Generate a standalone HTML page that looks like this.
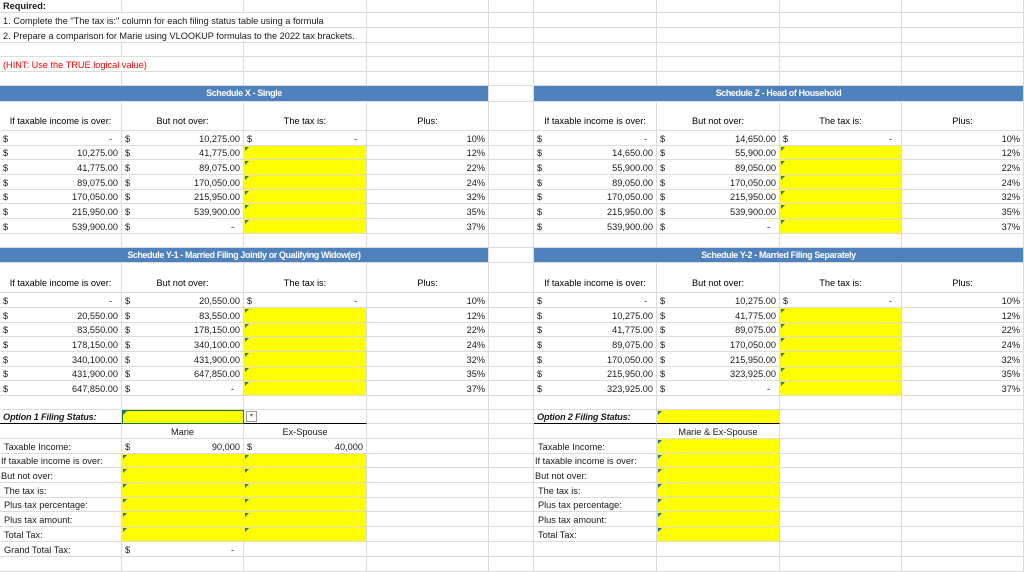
<!DOCTYPE html>
<html><head><meta charset="utf-8"><style>
*{margin:0;padding:0;box-sizing:border-box}
body{width:1024px;height:562px;overflow:hidden;background:#fff;font-family:"Liberation Sans",Arial,sans-serif;font-size:9.2px;color:#1a1a1a;position:relative}
table{border-collapse:separate;border-spacing:0;table-layout:fixed;width:1024px;position:absolute;left:0;top:0}
td{border-right:1px solid #dcdcdc;border-bottom:1px solid #dcdcdc;padding:0 3px;white-space:nowrap;overflow:visible;vertical-align:bottom;line-height:11px;position:relative}
.bn{background:#4f81bd;color:#fff;font-weight:bold;text-align:center;letter-spacing:-0.35px;vertical-align:middle;font-size:8.9px}
.y{background:#ffff00}
.c{text-align:center}.r{text-align:right}
.h td{vertical-align:bottom;padding-bottom:3px;color:#000}
.a{display:flex;justify-content:space-between}
.d{padding-right:6px}
.t::before{content:"";position:absolute;left:1px;top:1px;border-top:4px solid #1e73a8;border-right:4px solid transparent}
.bb{border-bottom:1px solid #000}
.it{font-style:italic;font-weight:bold;letter-spacing:-0.2px}
</style></head><body>
<table>
<colgroup><col style="width:122px"><col style="width:122px"><col style="width:123px"><col style="width:122px"><col style="width:45px"><col style="width:123px"><col style="width:123px"><col style="width:122px"><col style="width:122px"></colgroup>
<tr style="height:13px"><td style="font-weight:bold">Required:</td><td></td><td></td><td></td><td></td><td></td><td></td><td></td><td></td></tr>
<tr style="height:15px"><td colspan="3">1. Complete the "The tax is:" column for each filing status table using a formula</td><td></td><td></td><td></td><td></td><td></td><td></td></tr>
<tr style="height:15px"><td colspan="3">2. Prepare a comparison for Marie using VLOOKUP formulas to the 2022 tax brackets.</td><td></td><td></td><td></td><td></td><td></td><td></td></tr>
<tr style="height:14px"><td></td><td></td><td></td><td></td><td></td><td></td><td></td><td></td><td></td></tr>
<tr style="height:15px"><td colspan="2" style="color:#ff0000">(HINT: Use the TRUE logical value)</td><td></td><td></td><td></td><td></td><td></td><td></td><td></td></tr>
<tr style="height:14px"><td></td><td></td><td></td><td></td><td></td><td></td><td></td><td></td><td></td></tr>
<tr style="height:16px"><td colspan="4" class="bn">Schedule X - Single</td><td></td><td colspan="4" class="bn">Schedule Z - Head of Household</td></tr>
<tr class="h" style="height:29px"><td class="c">If taxable income is over:</td><td class="c">But not over:</td><td class="c">The tax is:</td><td class="c">Plus:</td><td></td><td class="c">If taxable income is over:</td><td class="c">But not over:</td><td class="c">The tax is:</td><td class="c">Plus:</td></tr>
<tr style="height:15px"><td><div class="a"><span>$</span><span class="d">-</span></div></td><td><div class="a"><span>$</span><span>10,275.00</span></div></td><td><div class="a"><span>$</span><span class="d">-</span></div></td><td class="r">10%</td><td></td><td><div class="a"><span>$</span><span class="d">-</span></div></td><td><div class="a"><span>$</span><span>14,650.00</span></div></td><td><div class="a"><span>$</span><span class="d">-</span></div></td><td class="r">10%</td></tr>
<tr style="height:14px"><td><div class="a"><span>$</span><span>10,275.00</span></div></td><td><div class="a"><span>$</span><span>41,775.00</span></div></td><td class="y t"></td><td class="r">12%</td><td></td><td><div class="a"><span>$</span><span>14,650.00</span></div></td><td><div class="a"><span>$</span><span>55,900.00</span></div></td><td class="y t"></td><td class="r">12%</td></tr>
<tr style="height:15px"><td><div class="a"><span>$</span><span>41,775.00</span></div></td><td><div class="a"><span>$</span><span>89,075.00</span></div></td><td class="y t"></td><td class="r">22%</td><td></td><td><div class="a"><span>$</span><span>55,900.00</span></div></td><td><div class="a"><span>$</span><span>89,050.00</span></div></td><td class="y t"></td><td class="r">22%</td></tr>
<tr style="height:15px"><td><div class="a"><span>$</span><span>89,075.00</span></div></td><td><div class="a"><span>$</span><span>170,050.00</span></div></td><td class="y t"></td><td class="r">24%</td><td></td><td><div class="a"><span>$</span><span>89,050.00</span></div></td><td><div class="a"><span>$</span><span>170,050.00</span></div></td><td class="y t"></td><td class="r">24%</td></tr>
<tr style="height:14px"><td><div class="a"><span>$</span><span>170,050.00</span></div></td><td><div class="a"><span>$</span><span>215,950.00</span></div></td><td class="y t"></td><td class="r">32%</td><td></td><td><div class="a"><span>$</span><span>170,050.00</span></div></td><td><div class="a"><span>$</span><span>215,950.00</span></div></td><td class="y t"></td><td class="r">32%</td></tr>
<tr style="height:15px"><td><div class="a"><span>$</span><span>215,950.00</span></div></td><td><div class="a"><span>$</span><span>539,900.00</span></div></td><td class="y t"></td><td class="r">35%</td><td></td><td><div class="a"><span>$</span><span>215,950.00</span></div></td><td><div class="a"><span>$</span><span>539,900.00</span></div></td><td class="y t"></td><td class="r">35%</td></tr>
<tr style="height:15px"><td><div class="a"><span>$</span><span>539,900.00</span></div></td><td><div class="a"><span>$</span><span class="d">-</span></div></td><td class="y t"></td><td class="r">37%</td><td></td><td><div class="a"><span>$</span><span>539,900.00</span></div></td><td><div class="a"><span>$</span><span class="d">-</span></div></td><td class="y t"></td><td class="r">37%</td></tr>
<tr style="height:14px"><td></td><td></td><td></td><td></td><td></td><td></td><td></td><td></td><td></td></tr>
<tr style="height:15px"><td colspan="4" class="bn">Schedule Y-1 - Married Filing Jointly or Qualifying Widow(er)</td><td></td><td colspan="4" class="bn">Schedule Y-2 - Married Filing Separately</td></tr>
<tr class="h" style="height:30px"><td class="c">If taxable income is over:</td><td class="c">But not over:</td><td class="c">The tax is:</td><td class="c">Plus:</td><td></td><td class="c">If taxable income is over:</td><td class="c">But not over:</td><td class="c">The tax is:</td><td class="c">Plus:</td></tr>
<tr style="height:15px"><td><div class="a"><span>$</span><span class="d">-</span></div></td><td><div class="a"><span>$</span><span>20,550.00</span></div></td><td><div class="a"><span>$</span><span class="d">-</span></div></td><td class="r">10%</td><td></td><td><div class="a"><span>$</span><span class="d">-</span></div></td><td><div class="a"><span>$</span><span>10,275.00</span></div></td><td><div class="a"><span>$</span><span class="d">-</span></div></td><td class="r">10%</td></tr>
<tr style="height:15px"><td><div class="a"><span>$</span><span>20,550.00</span></div></td><td><div class="a"><span>$</span><span>83,550.00</span></div></td><td class="y t"></td><td class="r">12%</td><td></td><td><div class="a"><span>$</span><span>10,275.00</span></div></td><td><div class="a"><span>$</span><span>41,775.00</span></div></td><td class="y t"></td><td class="r">12%</td></tr>
<tr style="height:14px"><td><div class="a"><span>$</span><span>83,550.00</span></div></td><td><div class="a"><span>$</span><span>178,150.00</span></div></td><td class="y t"></td><td class="r">22%</td><td></td><td><div class="a"><span>$</span><span>41,775.00</span></div></td><td><div class="a"><span>$</span><span>89,075.00</span></div></td><td class="y t"></td><td class="r">22%</td></tr>
<tr style="height:15px"><td><div class="a"><span>$</span><span>178,150.00</span></div></td><td><div class="a"><span>$</span><span>340,100.00</span></div></td><td class="y t"></td><td class="r">24%</td><td></td><td><div class="a"><span>$</span><span>89,075.00</span></div></td><td><div class="a"><span>$</span><span>170,050.00</span></div></td><td class="y t"></td><td class="r">24%</td></tr>
<tr style="height:15px"><td><div class="a"><span>$</span><span>340,100.00</span></div></td><td><div class="a"><span>$</span><span>431,900.00</span></div></td><td class="y t"></td><td class="r">32%</td><td></td><td><div class="a"><span>$</span><span>170,050.00</span></div></td><td><div class="a"><span>$</span><span>215,950.00</span></div></td><td class="y t"></td><td class="r">32%</td></tr>
<tr style="height:14px"><td><div class="a"><span>$</span><span>431,900.00</span></div></td><td><div class="a"><span>$</span><span>647,850.00</span></div></td><td class="y t"></td><td class="r">35%</td><td></td><td><div class="a"><span>$</span><span>215,950.00</span></div></td><td><div class="a"><span>$</span><span>323,925.00</span></div></td><td class="y t"></td><td class="r">35%</td></tr>
<tr style="height:15px"><td><div class="a"><span>$</span><span>647,850.00</span></div></td><td><div class="a"><span>$</span><span class="d">-</span></div></td><td class="y t"></td><td class="r">37%</td><td></td><td><div class="a"><span>$</span><span>323,925.00</span></div></td><td><div class="a"><span>$</span><span class="d">-</span></div></td><td class="y t"></td><td class="r">37%</td></tr>
<tr style="height:14px"><td></td><td></td><td></td><td></td><td></td><td></td><td></td><td></td><td></td></tr>
<tr style="height:14px"><td class="bb it">Option 1 Filing Status:</td><td class="bb y t" style="outline:1px solid #217346;outline-offset:-1px"></td><td class="bb"><span style="position:absolute;left:2px;top:1px;width:11px;height:11px;border:1px solid #999;background:#fff;font-size:6px;line-height:9px;text-align:center;color:#666">▾</span></td><td></td><td></td><td class="bb it">Option 2 Filing Status:</td><td class="bb y t"></td><td></td><td></td></tr>
<tr style="height:15px"><td></td><td class="c">Marie</td><td class="c">Ex-Spouse</td><td></td><td></td><td></td><td class="c">Marie &amp; Ex-Spouse</td><td></td><td></td></tr>
<tr style="height:15px"><td style="padding-left:4px">Taxable Income:</td><td><div class="a"><span>$</span><span>90,000</span></div></td><td><div class="a"><span>$</span><span>40,000</span></div></td><td></td><td></td><td style="padding-left:4px">Taxable Income:</td><td class="y t"></td><td></td><td></td></tr>
<tr style="height:14px"><td style="padding-left:1px">If taxable income is over:</td><td class="y t"></td><td class="y t"></td><td></td><td></td><td style="padding-left:1px">If taxable income is over:</td><td class="y t"></td><td></td><td></td></tr>
<tr style="height:15px"><td style="padding-left:1px">But not over:</td><td class="y t"></td><td class="y t"></td><td></td><td></td><td style="padding-left:1px">But not over:</td><td class="y t"></td><td></td><td></td></tr>
<tr style="height:15px"><td style="padding-left:4px">The tax is:</td><td class="y t"></td><td class="y t"></td><td></td><td></td><td style="padding-left:4px">The tax is:</td><td class="y t"></td><td></td><td></td></tr>
<tr style="height:14px"><td style="padding-left:4px">Plus tax percentage:</td><td class="y t"></td><td class="y t"></td><td></td><td></td><td style="padding-left:4px">Plus tax percentage:</td><td class="y t"></td><td></td><td></td></tr>
<tr style="height:15px"><td style="padding-left:4px">Plus tax amount:</td><td class="y t"></td><td class="y t"></td><td></td><td></td><td style="padding-left:4px">Plus tax amount:</td><td class="y t"></td><td></td><td></td></tr>
<tr style="height:15px"><td style="padding-left:4px">Total Tax:</td><td class="y t"></td><td class="y t"></td><td></td><td></td><td style="padding-left:4px">Total Tax:</td><td class="y t"></td><td></td><td></td></tr>
<tr style="height:15px"><td style="padding-left:4px">Grand Total Tax:</td><td><div class="a"><span>$</span><span class="d">-</span></div></td><td></td><td></td><td></td><td></td><td></td><td></td><td></td></tr>
<tr style="height:15px"><td></td><td></td><td></td><td></td><td></td><td></td><td></td><td></td><td></td></tr>
</table>
</body></html>
